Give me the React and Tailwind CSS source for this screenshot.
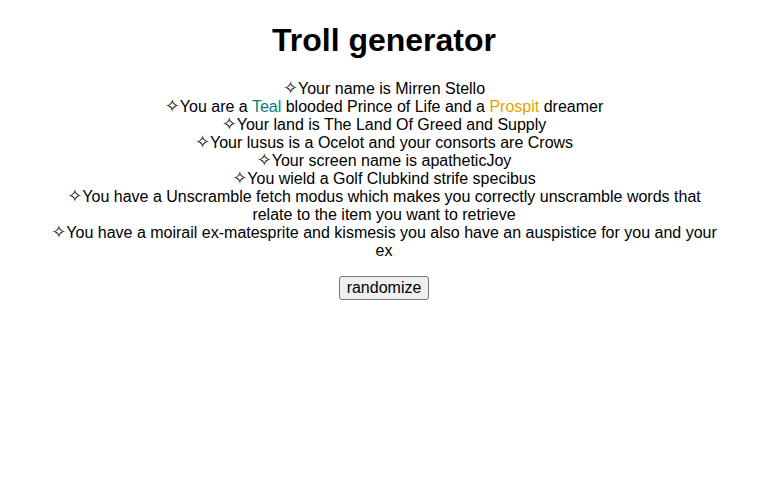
export default function App() {
  const lines = [
    <>Your name is Mirren Stello</>,
    <>You are a <span className="text-[#008080]">Teal</span> blooded Prince of Life and a <span className="text-[#e6a300]">Prospit</span> dreamer</>,
    <>Your land is The Land Of Greed and Supply</>,
    <>Your lusus is a Ocelot and your consorts are Crows</>,
    <>Your screen name is apatheticJoy</>,
    <>You wield a Golf Clubkind strife specibus</>,
    <>You have a Unscramble fetch modus which makes you correctly unscramble words that relate to the item you want to retrieve</>,
    <>You have a moirail ex-matesprite and kismesis you also have an auspistice for you and your ex</>,
  ];
  return (
    <div className="min-h-[480px] bg-white text-black font-['Liberation_Sans',Arial,sans-serif] text-[16px] leading-[18px] text-center px-[48px]">
      <h1 className="text-[32px] leading-[37px] font-bold pt-[22px] mb-[21px]">Troll generator</h1>
      <div>
        {lines.map((l, i) => (
          <div key={i} className="h-auto"><span className="font-['DejaVu_Sans',sans-serif] text-[18px] leading-[0px]">✧</span>{l}</div>
        ))}
      </div>
      <div className="mt-[16px]">
        <button className="h-[24px] px-[7px] border border-[#767676] rounded-[3px] bg-[#efefef] text-[16px] leading-[18px] font-['Liberation_Sans',Arial,sans-serif]">randomize</button>
      </div>
    </div>
  );
}
